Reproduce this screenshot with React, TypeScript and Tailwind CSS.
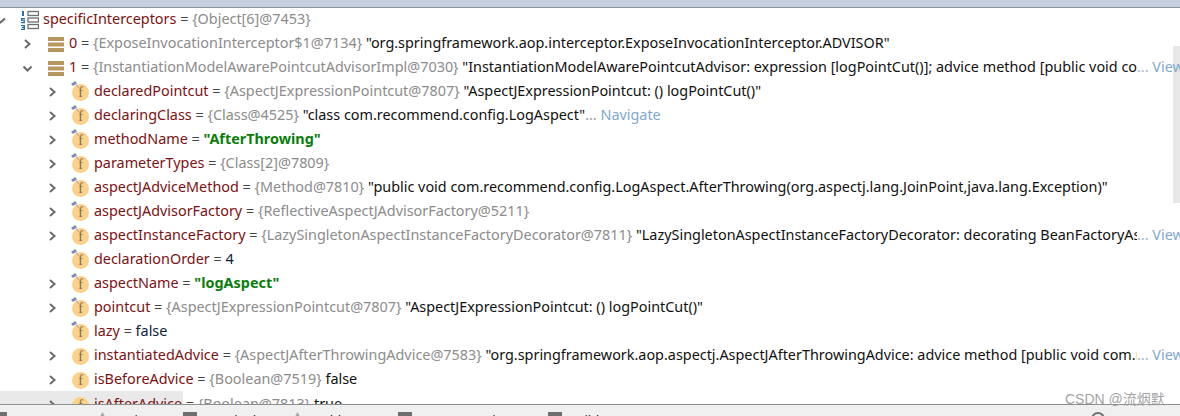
import type { ReactNode } from "react";

const name = "text-[#7b1113]";
const gray = "text-[#8c8c8c]";

function Chevron({ open }: { open?: boolean }) {
  return (
    <svg width="9" height="10" viewBox="0 0 9 10" className="shrink-0">
      <path
        d={open ? "M0.5 3.500 L4.500 7.500 L8.500 3.500" : "M2 1 L6.500 5 L2 9"}
        fill="none"
        stroke="#6b6b6b"
        strokeWidth="2"
      />
    </svg>
  );
}

function ListIcon() {
  return (
    <svg width="16" height="15" viewBox="0 0 16 15" className="shrink-0">
      <rect x="0" y="0" width="16" height="4" fill="#b8975f" />
      <rect x="0" y="5.500" width="16" height="4" fill="#b8975f" />
      <rect x="0" y="11" width="16" height="4" fill="#b8975f" />
    </svg>
  );
}

function ArrayIcon() {
  return (
    <svg width="18" height="20" viewBox="0 0 18 20" className="shrink-0">
      <path d="M1 1h2v5H1z" fill="#2f6fa8" />
      <path d="M0 8h4v1.400H1.600v.8H4v3H0v-1.300h2.400v-.9H0z" fill="#2f6fa8" />
      <path d="M0 15h4v5H0v-1.200h2.500v-.7H1v-1h1.500v-.8H0z" fill="#2f6fa8" />
      <rect x="7" y="1.500" width="10.500" height="4" fill="none" stroke="#6e6e6e" strokeWidth="1.300" />
      <rect x="7" y="8" width="10.500" height="4" fill="none" stroke="#6e6e6e" strokeWidth="1.300" />
      <rect x="7" y="14.500" width="10.500" height="4" fill="none" stroke="#6e6e6e" strokeWidth="1.300" />
    </svg>
  );
}

function FieldIcon({ pin = true }: { pin?: boolean }) {
  return (
    <span className="relative flex h-[17px] w-[17px] shrink-0 items-center justify-center rounded-full bg-[#fbd28a] font-['Liberation_Serif',serif] text-[14px] text-[#7d6b4c]">
      f
      {pin && (
        <svg width="11" height="9" viewBox="0 0 11 9" className="absolute -left-px -top-[3px]">
          <path d="M0 3 L4 0 L6 2.500 L2 5 Z" fill="#7d91a5" />
          <path d="M5 3.500 L8.500 7.500" stroke="#93a1ae" strokeWidth="1" />
        </svg>
      )}
    </span>
  );
}

type Row = {
  field: string;
  arrow?: boolean;
  pin?: boolean;
  type?: string;
  eq?: string;
  value?: string;
  green?: string;
  link?: string;
  selected?: boolean;
};

const fields: Row[] = [
  { field: "declaredPointcut", arrow: true, type: "{AspectJExpressionPointcut@7807}", value: "\"AspectJExpressionPointcut: () logPointCut()\"" },
  { field: "declaringClass", arrow: true, type: "{Class@4525}", value: "\"class com.recommend.config.LogAspect\"", link: "Navigate" },
  { field: "methodName", arrow: true, green: "\"AfterThrowing\"" },
  { field: "parameterTypes", arrow: true, type: "{Class[2]@7809}" },
  { field: "aspectJAdviceMethod", arrow: true, type: "{Method@7810}", value: "\"public void com.recommend.config.LogAspect.AfterThrowing(org.aspectj.lang.JoinPoint,java.lang.Exception)\"" },
  { field: "aspectJAdvisorFactory", arrow: true, type: "{ReflectiveAspectJAdvisorFactory@5211}" },
  { field: "aspectInstanceFactory", arrow: true, type: "{LazySingletonAspectInstanceFactoryDecorator@7811}", value: "\"LazySingletonAspectInstanceFactoryDecorator: decorating BeanFactoryAspectInstanceFactory", link: "View" },
  { field: "declarationOrder", eq: "4" },
  { field: "aspectName", arrow: true, green: "\"logAspect\"" },
  { field: "pointcut", arrow: true, type: "{AspectJExpressionPointcut@7807}", value: "\"AspectJExpressionPointcut: () logPointCut()\"" },
  { field: "lazy", eq: "false" },
  { field: "instantiatedAdvice", arrow: true, pin: false, type: "{AspectJAfterThrowingAdvice@7583}", value: "\"org.springframework.aop.aspectj.AspectJAfterThrowingAdvice: advice method [public void com.recommend", link: "View" },
  { field: "isBeforeAdvice", arrow: true, pin: false, type: "{Boolean@7519}", value: "false" },
  { field: "isAfterAdvice", arrow: true, pin: false, type: "{Boolean@7813}", value: "true", selected: true },
];

function ViewLink() {
  return (
    <span className="w-[43px] shrink-0 whitespace-pre pb-[2px] text-[#7fa8cf]">
      <span className="text-[#9ab4cc]">... </span>View
    </span>
  );
}

function Label({ row }: { row: Row }) {
  return (
    <span className="ml-[5px] min-w-0 flex-1 overflow-hidden whitespace-pre pb-[2px]">
      <span className={name}>{row.field}</span>
      <span className="text-[#444]"> = </span>
      {row.type && <span className={gray}>{row.type} </span>}
      {row.green && <span className="font-bold text-[#0a7d0a]">{row.green}</span>}
      {row.eq && <span className="text-[#10203a]">{row.eq}</span>}
      {row.value && <span className="text-[#111]">{row.value}</span>}
      {row.link === "Navigate" && (
        <span className="text-[#7fa8cf]">
          <span className="text-[#9a9a9a]">... </span>Navigate
        </span>
      )}
    </span>
  );
}

function StatusItem({ label, icon, className }: { label: string; icon: ReactNode; className: string }) {
  return (
    <div className={"flex shrink-0 items-start gap-[6px] " + className}>
      {icon}
      <span className="-mt-px text-[13px] leading-[18px] text-[#111]">{label}</span>
    </div>
  );
}

const boxIcon = <span className="h-[12px] w-[14px] shrink-0 bg-[#6f6f6f]" />;
const triIcon = (
  <svg width="11" height="10" viewBox="0 0 11 10" className="shrink-0">
    <path d="M5.500 0 L11 10 H0 Z" fill="#a8a8a8" />
  </svg>
);

export default function App() {
  return (
    <div className="relative flex h-[416px] w-[1180px] flex-col overflow-hidden bg-white font-['Noto_Sans',sans-serif] text-[14.4px]">
      <div className="h-[8px] shrink-0 border-b border-[#8e939c] bg-[#c5cfe0]" />
      <div className="relative min-h-0 flex-1 overflow-hidden">
        <div className="absolute right-0 top-[38px] h-[157px] w-[7px] bg-[#e7e7e7]" />
        <div className="relative flex h-[24px] items-center">
          <span className="mr-[15px] -ml-[5px] flex">
            <svg width="11" height="9" viewBox="0 0 11 9">
              <path d="M1 2.500 L5.500 6.500 L10 2.500" fill="none" stroke="#6b6b6b" strokeWidth="2" />
            </svg>
          </span>
          <ArrayIcon />
          <span className="ml-[4px] whitespace-pre pb-[2px]">
            <span className={name}>specificInterceptors</span>
            <span className="text-[#444]"> = </span>
            <span className={gray}>{"{Object[6]@7453}"}</span>
          </span>
        </div>
        <div className="relative flex h-[24px] items-center pl-[23px]">
          <Chevron />
          <span className="ml-[16px] flex"><ListIcon /></span>
          <span className="ml-[5px] whitespace-pre pb-[2px]">
            <span className={name}>0</span>
            <span className="text-[#444]"> = </span>
            <span className={gray}>{"{ExposeInvocationInterceptor$1@7134} "}</span>
            <span className="text-[#111]">"org.springframework.aop.interceptor.ExposeInvocationInterceptor.ADVISOR"</span>
          </span>
        </div>
        <div className="relative flex h-[24px] items-center pl-[23px]">
          <Chevron open />
          <span className="ml-[16px] flex"><ListIcon /></span>
          <span className="ml-[5px] min-w-0 flex-1 overflow-hidden whitespace-pre pb-[2px]">
            <span className={name}>1</span>
            <span className="text-[#444]"> = </span>
            <span className={gray}>{"{InstantiationModelAwarePointcutAdvisorImpl@7030} "}</span>
            <span className="text-[#111]">"InstantiationModelAwarePointcutAdvisor: expression [logPointCut()]; advice method [public void com.recommend</span>
          </span>
          <ViewLink />
        </div>
        {fields.map((row) => (
          <div
            key={row.field}
            className={
              row.selected
                ? "relative -mt-px flex h-[25px] items-center bg-[linear-gradient(90deg,#e9e9e9_183px,#ffffff_183px)] pl-[48px] pt-[3px]"
                : "relative flex h-[24px] items-center pl-[48px]"
            }
          >
            <span className="flex w-[24px] shrink-0">{row.arrow && <Chevron />}</span>
            <FieldIcon pin={row.pin !== false} />
            <Label row={row} />
            {row.link === "View" && <ViewLink />}
          </div>
        ))}
      </div>
      <div className="flex h-[12px] shrink-0 items-start overflow-hidden border-t border-[#8f8f8f] bg-[#f0f0f0] pt-[7px]">
        <StatusItem className="w-[97px]" icon={<span className="h-[12px] w-[7px] shrink-0 bg-[#6f6f6f]" />} label="6: TODO" />
        <StatusItem className="w-[86px]" icon={triIcon} label="Spring" />
        <StatusItem className="w-[109px]" icon={boxIcon} label="Terminal" />
        <StatusItem className="w-[106px]" icon={triIcon} label="Problems" />
        <StatusItem className="w-[150px]" icon={boxIcon} label="Java Enterprise" />
        <StatusItem className="flex-1" icon={boxIcon} label="Build" />
        <StatusItem className="w-[89px]" icon={<span className="h-[14px] w-[14px] shrink-0 rounded-full border-2 border-[#6f6f6f]" />} label="Event Log" />
      </div>
      <span className="absolute left-[1065px] top-[389px] font-['Liberation_Sans','Noto_Sans_CJK_SC',sans-serif] text-[14px] text-[#a3a3a3]">CSDN @流烟默</span>
    </div>
  );
}
